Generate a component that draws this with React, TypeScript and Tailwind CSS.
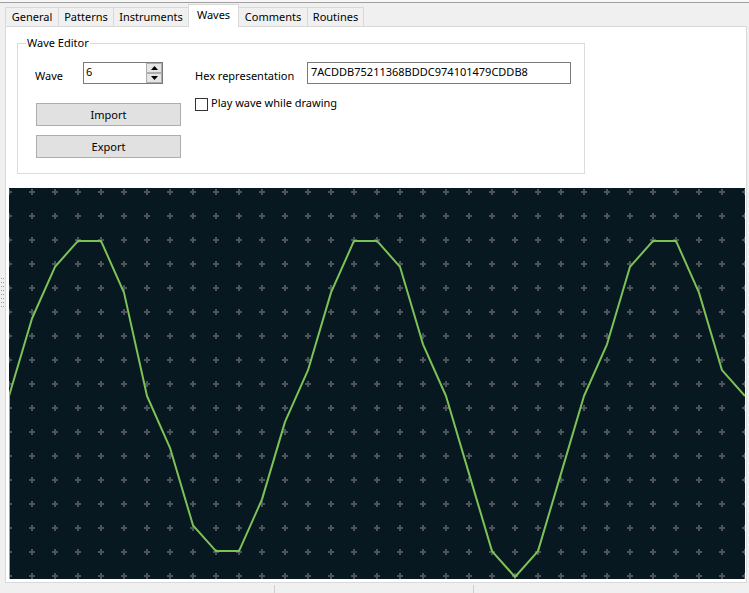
import clsx from "clsx";

const WAVE = "7ACDDB75211368BDDC974101479CDDB8";

const tabs = [
  { label: "General", width: "w-[54px]" },
  { label: "Patterns", width: "w-[56px]" },
  { label: "Instruments", width: "w-[76px]" },
  { label: "Waves", width: "w-[51px]", active: true },
  { label: "Comments", width: "w-[70px]" },
  { label: "Routines", width: "w-[57px]" },
];

function SpinBox() {
  return (
    <div className="flex h-[22px] w-[80px] border border-[#7a7a7a] bg-white">
      <span className="flex-1 pl-[2px] pt-px leading-[16px]">6</span>
      <div className="flex w-[16px] flex-col">
        <div className="flex h-[10px] items-center justify-center border border-[#adadad] bg-[#e5e5e5]">
          <svg width="7" height="4" viewBox="0 0 7 4">
            <path d="M0 4L3.5 0L7 4Z" fill="#000" />
          </svg>
        </div>
        <div className="flex h-[10px] items-center justify-center border border-[#adadad] bg-[#e5e5e5]">
          <svg width="7" height="4" viewBox="0 0 7 4">
            <path d="M0 0L3.5 4L7 0Z" fill="#000" />
          </svg>
        </div>
      </div>
    </div>
  );
}

function WaveCanvas() {
  const width = 736;
  const height = 391;
  const step = 23;
  const levelY = (v: number) => 389 - v * 25.85;
  const values = WAVE.split("").map((c) => parseInt(c, 16));
  const points = [...values, values[0]]
    .map((v, i) => `${i * step},${levelY(v).toFixed(1)}`)
    .join(" ");
  const cols = Array.from({ length: 33 }, (_, k) => k * step);
  const rows = Array.from({ length: 17 }, (_, j) => 4 + j * 24);

  return (
    <svg width={width} height={height} className="block bg-[#081820]">
      {rows.map((y) =>
        cols.map((x) => (
          <path
            key={`${x}-${y}`}
            d={`M${x - 3} ${y}h6M${x} ${y - 3}v6`}
            stroke="#4e5358"
            strokeWidth={2}
          />
        ))
      )}
      <line x1={0.5} y1={levelY(7)} x2={0.5} y2={height} stroke="#7cc257" strokeWidth={1} />
      <polyline
        points={points}
        fill="none"
        stroke="#7cc257"
        strokeWidth={2}
        strokeLinejoin="round"
      />
    </svg>
  );
}

export default function App() {
  return (
    <div className="h-[593px] w-[749px] overflow-hidden bg-[#f0f0f0] font-['Noto_Sans',sans-serif] text-[11px] text-black">
      <div className="h-[2px] bg-[#f7f7f7]" />
      <div className="h-px bg-[#a0a0a0]" />

      {/* tab strip */}
      <div className="flex h-[23px] items-end pl-[5px]">
        {tabs.map((tab, i) => (
          <div
            key={tab.label}
            className={clsx(
              "flex items-center justify-center border border-b-0 border-[#d9d9d9] leading-[16px]",
              tab.width,
              i > 0 && "-ml-px",
              tab.active
                ? "relative z-10 -mb-px h-[23px] bg-white pb-[2px]"
                : "h-[19px] bg-[#f0f0f0] pb-px"
            )}
          >
            {tab.label}
          </div>
        ))}
      </div>

      <div className="flex">
        <div className="flex w-[5px] flex-col gap-[3px] pl-px pt-[252px]">
          {Array.from({ length: 8 }).map((_, i) => (
            <div key={i} className="flex gap-px">
              <span className="size-px bg-[#a0a0a0]" />
              <span className="size-px bg-[#a0a0a0]" />
            </div>
          ))}
        </div>

        <div className="flex h-[557px] w-[742px] flex-col border border-[#d9d9d9] bg-white">
          {/* Wave Editor group */}
          <div className="relative ml-[11px] mt-[16px] flex h-[131px] w-[568px] border border-[#dcdcdc] pl-[17px] pt-[18px]">
            <span className="absolute left-[8px] top-[-9px] bg-white px-px leading-[16px]">
              Wave Editor
            </span>

            <div className="flex w-[146px] flex-col">
              <div className="flex h-[22px]">
                <span className="w-[48px] pt-[6px] leading-[16px]">Wave</span>
                <SpinBox />
              </div>
              <button className="ml-px mt-[19px] h-[23px] w-[145px] border border-[#adadad] bg-[#e1e1e1] leading-[16px]">
                Import
              </button>
              <button className="ml-px mt-[9px] h-[23px] w-[145px] border border-[#adadad] bg-[#e1e1e1] leading-[16px]">
                Export
              </button>
            </div>

            <div className="ml-[14px] flex flex-col">
              <div className="flex h-[22px]">
                <span className="w-[112px] pt-[6px] leading-[16px]">Hex representation</span>
                <div className="h-[22px] w-[264px] border border-[#7a7a7a] bg-white pl-[3px] pt-px leading-[16px]">
                  {WAVE}
                </div>
              </div>
              <label className="mt-[14px] flex items-start">
                <span className="size-[13px] border border-[#333333] bg-white" />
                <span className="-mt-[3px] ml-[3px] leading-[16px]">Play wave while drawing</span>
              </label>
            </div>
          </div>

          <div className="ml-[3px] mt-[14px]">
            <WaveCanvas />
          </div>
        </div>
      </div>

      {/* status bar */}
      <div className="flex h-[10px] pl-[274px] pt-[2px]">
        <span className="w-px bg-[#d0d0d0]" />
        <span className="ml-[198px] w-px bg-[#d0d0d0]" />
      </div>
    </div>
  );
}
